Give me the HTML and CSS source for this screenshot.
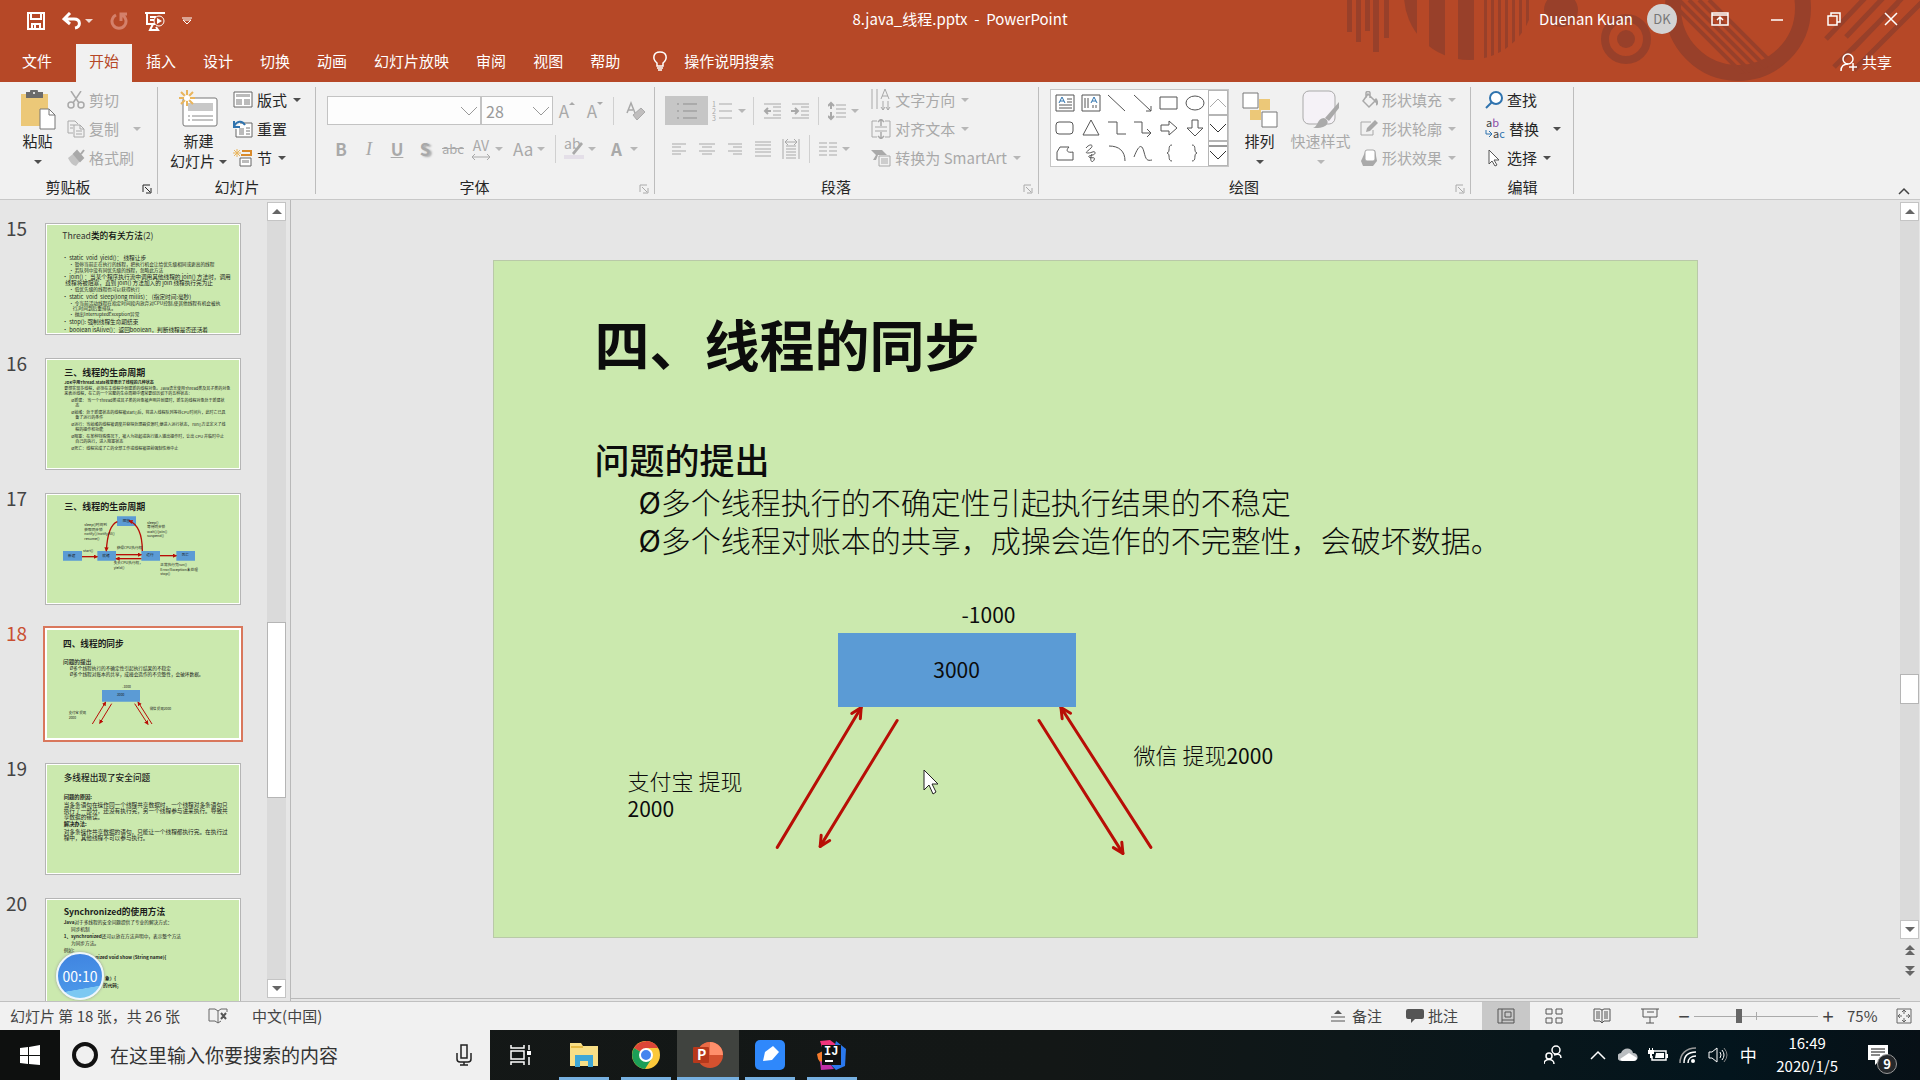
FILE: index.html
```html
<!DOCTYPE html>
<html lang="zh-CN">
<head>
    <meta charset="UTF-8">
    <meta name="viewport" content="width=device-width, initial-scale=1.0">
    <title>8.java_线程.pptx - PowerPoint</title>
    <link rel="stylesheet" href="styles.css">
</head>
<body>
    <!-- shared arrow heads -->
    <svg class="defs" width="0" height="0" aria-hidden="true">
        <defs>
            <marker id="arrow" viewBox="0 0 14 14" refX="12" refY="7" markerWidth="14" markerHeight="14" markerUnits="userSpaceOnUse" orient="auto">
                <path d="M2 2l10 5-10 5" fill="none" stroke="#b80e06" stroke-width="3" stroke-linecap="round" stroke-linejoin="round"/>
            </marker>
            <marker id="arrow-fill" viewBox="0 0 12 12" refX="10" refY="6" markerWidth="13" markerHeight="13" markerUnits="userSpaceOnUse" orient="auto">
                <path d="M0 0l12 6-12 6z" fill="#b80e06"/>
            </marker>
            <symbol id="launcher" viewBox="0 0 10 10">
                <path d="M1 8V1h7M3 3l5 5M9 4v5H4" fill="none" stroke="currentColor"/>
            </symbol>
        </defs>
    </svg>

    <header class="top">
        <svg class="decor" viewBox="1320 0 600 82" aria-hidden="true">
            <defs><clipPath id="disc"><circle cx="1469" cy="-5" r="65"/></clipPath>
            <clipPath id="hoop"><circle cx="1738" cy="8" r="66"/></clipPath></defs>
            <g fill="#98402a">
                <path d="M1347 0h5v32h-5zM1356 0h5v42h-5zM1365 0h5v31h-5zM1373 0h6v52h-6zM1384 0h5v38h-5z"/>
                <g clip-path="url(#disc)"><path d="M1400 0h17v60h-17zM1429 0h16v60h-16zM1458 0h16v60h-16zM1484 0h3v60h-3zM1491 0h3v60h-3zM1498 0h3v60h-3zM1505 0h3v60h-3zM1512 0h3v60h-3zM1519 0h3v60h-3zM1526 0h3v60h-3z"/></g>
                <circle cx="1561" cy="10" r="17"/>
                <circle cx="1626" cy="39" r="9"/>
            </g>
            <g fill="none" stroke="#98402a">
                <circle cx="1626" cy="39" r="21" stroke-width="8"/>
                <circle cx="1738" cy="8" r="65" stroke-width="16"/>
                <g clip-path="url(#hoop)"><path d="M1669 0l80 80M1679 0l80 80M1689 0l80 80M1699 0l80 80M1709 0l80 80" stroke-width="4"/></g>
                <path d="M1826 39l40-42M1846 37l38-40M1852 50l52-54M1834 67l64-64M1854 70l74-74" stroke-width="5"/>
            </g>
        </svg>

        <div class="titlebar">
            <div class="quick">
                <button aria-label="保存"><svg width="18" height="18" viewBox="0 0 18 18"><path d="M1 1h16v16H1zM4 1v6h10V1M5 17v-5h8v5" fill="none" stroke="#fff" stroke-width="2"/><path d="M7 13h2v4H7z" fill="#fff"/></svg></button>
                <button aria-label="撤消"><svg width="20" height="18" viewBox="0 0 20 18"><path d="M8 1L2 7l6 5M3 7h9c7 0 7 8 1 9" fill="none" stroke="#fff" stroke-width="3"/></svg><i class="caret"></i></button>
                <button aria-label="重复" class="dim"><svg width="18" height="18" viewBox="0 0 18 18"><path d="M6 3a7 7 0 1 0 6 0M11 9V2h6" fill="none" stroke="#d4806a" stroke-width="3"/></svg></button>
                <button aria-label="从头开始"><svg width="20" height="20" viewBox="0 0 20 20"><path d="M0 2h20M2 2v11h8M5 6h6M5 9h4M8 13l-3 6h8l-2-3" fill="none" stroke="#fff" stroke-width="2"/><circle cx="14" cy="10" r="5" fill="#b64827" stroke="#fff"/><path d="M12 7l5 3-5 3z" fill="#fff"/></svg></button>
                <button aria-label="自定义快速访问工具栏"><svg width="10" height="8" viewBox="0 0 10 8"><path d="M0 1h10M1 3h8L5 7z" fill="none" stroke="#fff"/></svg></button>
            </div>
            <div class="doc-title">8.java_线程.pptx&nbsp; -&nbsp; PowerPoint</div>
            <div class="account">
                <span>Duenan Kuan</span>
                <span class="avatar">DK</span>
                <button aria-label="功能区显示选项"><svg width="18" height="14" viewBox="0 0 18 14"><path d="M1 1h16v12H1zM1 3h16M9 12V6M6 8l3-3 3 3" fill="none" stroke="#fff" stroke-width="1.5"/></svg></button>
                <button aria-label="最小化"><svg width="14" height="14" viewBox="0 0 14 14"><path d="M1 8h12" stroke="#fff" stroke-width="1.5"/></svg></button>
                <button aria-label="还原"><svg width="14" height="14" viewBox="0 0 14 14"><path d="M1 4h9v9H1zM4 4V1h9v9h-3" fill="none" stroke="#fff" stroke-width="1.5"/></svg></button>
                <button aria-label="关闭"><svg width="14" height="14" viewBox="0 0 14 14"><path d="M1 1l12 12M13 1L1 13" stroke="#fff" stroke-width="1.5"/></svg></button>
            </div>
        </div>

        <nav class="tabs">
            <button class="tab file">文件</button>
            <button class="tab active">开始</button>
            <button class="tab">插入</button>
            <button class="tab">设计</button>
            <button class="tab">切换</button>
            <button class="tab">动画</button>
            <button class="tab">幻灯片放映</button>
            <button class="tab">审阅</button>
            <button class="tab">视图</button>
            <button class="tab">帮助</button>
            <button class="tab tell"><svg width="16" height="20" viewBox="0 0 16 20"><path d="M5 15v-3C0 8 1 1 8 1s8 7 3 11v3zM5 17h6M6 19h4" fill="none" stroke="#fff" stroke-width="1.5"/></svg>操作说明搜索</button>
            <button class="tab share"><svg width="18" height="18" viewBox="0 0 18 18"><circle cx="8" cy="6" r="5" fill="none" stroke="#fff" stroke-width="1.5"/><path d="M1 18c0-5 3-7 7-7M13 10v8M9 14h8" fill="none" stroke="#fff" stroke-width="1.5"/></svg>共享</button>
        </nav>
    </header>

    <section class="ribbon">
        <div class="group clipboard">
            <div class="group-body">
                <button class="big">
                    <svg width="36" height="40" viewBox="0 0 36 40"><path d="M1 4h27v32H1z" fill="#ecc878"/><path d="M6 2h4a4 4 0 0 1 8 0h5v6H6z" fill="#6b6b6b"/><circle cx="14" cy="3" r="1" fill="#fff"/><path d="M20 19h9l6 6v14H20z" fill="#fff" stroke="#777"/><path d="M29 19v6h6" fill="none" stroke="#777"/></svg>
                    <span>粘贴</span><i class="caret"></i>
                </button>
                <div class="stack disabled">
                    <button><svg width="18" height="18" viewBox="0 0 18 18" fill="none" stroke="currentColor" stroke-width="1.5"><path d="M4 0l8 12M14 0L6 12"/><circle cx="4" cy="14" r="3"/><circle cx="14" cy="14" r="3"/></svg>剪切</button>
                    <button><svg width="18" height="18" viewBox="0 0 18 18" fill="none" stroke="currentColor"><path d="M6 13H1V1h7l3 3M3 5h4M3 8h3M7 5h6l4 4v8H7zM13 5v4h4M9 11h6M9 14h6"/></svg>复制<i class="caret far"></i></button>
                    <button><svg width="18" height="18" viewBox="0 0 18 18"><path d="M1 9l5-4 7 7-4 5C5 16 3 13 1 9z" fill="#c4c4c4"/><path d="M7 5l3-3 6 7-3 3zM14 5l3-4" fill="currentColor" stroke="currentColor" stroke-width="2"/></svg>格式刷</button>
                </div>
            </div>
            <div class="group-name">剪贴板<svg class="launch"><use href="#launcher"/></svg></div>
        </div>

        <div class="group slides">
            <div class="group-body">
                <button class="big">
                    <svg width="40" height="40" viewBox="0 0 40 40"><rect x="4" y="8" width="34" height="28" rx="2" fill="#fff" stroke="#777"/><path d="M9 13h25v8H9z" fill="#c8c8c8"/><path d="M9 26h2M13 26h21M9 30h2M13 30h21" stroke="#888"/><path d="M8 0v16M0 8h16M2 2l12 12M14 2L2 14" stroke="#e9b55c" stroke-width="2"/><circle cx="8" cy="8" r="3" fill="#fff"/></svg>
                    <span>新建<br>幻灯片<i class="caret inline"></i></span>
                </button>
                <div class="stack">
                    <button><svg width="20" height="18" viewBox="0 0 20 18"><path d="M1 1h18v15H1z" fill="#fff" stroke="#666"/><path d="M3 3h14v3H3zM3 8h6v6H3z" fill="#bbb"/><path d="M11 9h6M11 11h6M11 13h6" stroke="#777"/></svg>版式<i class="caret"></i></button>
                    <button><svg width="20" height="18" viewBox="0 0 20 18"><path d="M7 3h12v14H3V9" fill="#fff" stroke="#666"/><path d="M6 8h5v7H6z" fill="#bbb"/><path d="M13 8h4M13 11h4M13 14h4" stroke="#777"/><path d="M1 1v6h6M1 6c3-5 8-6 11-1" fill="none" stroke="#2f73ae" stroke-width="2"/></svg>重置</button>
                    <button><svg width="20" height="18" viewBox="0 0 20 18"><path d="M4 0v8M0 4h8M1 1l6 6M7 1L1 7" stroke="#e9b55c"/><path d="M9 2h9v4H8" fill="none" stroke="#d98a2b" stroke-width="2"/><path d="M7 9h11v8H7z" fill="#fff" stroke="#666"/><path d="M9 11h7v3H9z" fill="#bbb"/></svg>节<i class="caret"></i></button>
                </div>
            </div>
            <div class="group-name">幻灯片</div>
        </div>

        <div class="group font">
            <div class="group-body rows disabled">
                <div class="row">
                    <div class="combo family"><select aria-label="字体"><option></option></select><svg width="16" height="10" viewBox="0 0 16 10"><path d="M0 1l8 8 8-8" fill="none" stroke="#999"/></svg></div>
                    <div class="combo size"><select aria-label="字号"><option>28</option></select><svg width="16" height="10" viewBox="0 0 16 10"><path d="M0 1l8 8 8-8" fill="none" stroke="#999"/></svg></div>
                    <button class="tool letter" aria-label="增大字号">A<i class="tip up"></i></button>
                    <button class="tool letter" aria-label="减小字号">A<i class="tip"></i></button>
                    <i class="bar"></i>
                    <button class="tool eraser" aria-label="清除格式"><svg width="20" height="20" viewBox="0 0 20 20"><path d="M1 12L5 2l4 10M2 9h5" fill="none" stroke="currentColor" stroke-width="1.5"/><path d="M7 14l8-7 4 4-8 8z" fill="#c0bebe" stroke="#aaa"/></svg></button>
                </div>
                <div class="row">
                    <button class="tool wide"><b>B</b></button>
                    <button class="tool wide serif"><em>I</em></button>
                    <button class="tool wide"><b><u>U</u></b></button>
                    <button class="tool wide shadow"><b>S</b></button>
                    <button class="tool wide strike"><s>abc</s></button>
                    <button class="tool spacing" aria-label="字符间距"><span>AV</span><svg width="20" height="7" viewBox="0 0 20 7"><path d="M1 4h18M4 1L1 4l3 3M16 1l3 3-3 3" fill="none" stroke="currentColor"/></svg></button>
                    <i class="caret"></i>
                    <button class="tool aa">Aa<i class="caret"></i></button>
                    <i class="bar"></i>
                    <button class="tool" aria-label="突出显示"><svg width="20" height="24" viewBox="0 0 20 24"><text x="0" y="12" class="av">ab</text><path d="M8 16l9-11 2 2-9 11z" fill="currentColor"/><path d="M0 18h20v4H0z" fill="#e4dfe8"/></svg></button>
                    <i class="caret"></i>
                    <button class="tool color"><b>A</b></button>
                    <i class="caret"></i>
                </div>
            </div>
            <div class="group-name">字体<svg class="launch dim"><use href="#launcher"/></svg></div>
        </div>

        <div class="group paragraph">
            <div class="group-body disabled">
                <div class="rows">
                    <div class="row">
                        <button class="tool bullets" aria-label="项目符号"><svg width="20" height="18" viewBox="0 0 20 18"><path d="M6 2h14M6 9h14M6 16h14M0 2h2M0 9h2M0 16h2" stroke="#8f8f8f"/></svg></button>
                        <button class="tool" aria-label="编号"><svg width="20" height="20" viewBox="0 0 20 20"><path d="M7 3h13M7 10h13M7 17h13" stroke="currentColor"/><text x="0" y="6" class="num">1</text><text x="0" y="13" class="num">2</text><text x="0" y="20" class="num">3</text></svg></button>
                        <i class="caret"></i><i class="bar"></i>
                        <button class="tool" aria-label="减少缩进"><svg width="18" height="16" viewBox="0 0 18 16"><path d="M1 1h17M10 4h8M10 8h8M10 12h8M1 15h17" stroke="currentColor"/><path d="M8 8H2M5 5L2 8l3 3" fill="none" stroke="currentColor" stroke-width="2"/></svg></button>
                        <button class="tool" aria-label="增加缩进"><svg width="18" height="16" viewBox="0 0 18 16"><path d="M1 1h17M10 4h8M10 8h8M10 12h8M1 15h17" stroke="currentColor"/><path d="M0 8h7M4 5l3 3-3 3" fill="none" stroke="currentColor" stroke-width="2"/></svg></button>
                        <i class="bar"></i>
                        <button class="tool" aria-label="行距"><svg width="18" height="20" viewBox="0 0 18 20"><path d="M8 4h10M8 8h10M8 12h10M8 16h10" stroke="currentColor"/><path d="M3 2v6M3 11v7M0 5l3-3 3 3M0 15l3 3 3-3" fill="none" stroke="currentColor" stroke-width="2"/></svg></button>
                        <i class="caret"></i>
                    </div>
                    <div class="row">
                        <button class="tool" aria-label="左对齐"><svg width="14" height="14" viewBox="0 0 14 14"><path d="M0 2h14M0 5h9M0 9h14M0 12h9" stroke="currentColor"/></svg></button>
                        <button class="tool" aria-label="居中"><svg width="16" height="14" viewBox="0 0 16 14"><path d="M0 2h16M3 5h10M0 9h16M3 12h10" stroke="currentColor"/></svg></button>
                        <button class="tool" aria-label="右对齐"><svg width="14" height="14" viewBox="0 0 14 14"><path d="M0 2h14M5 5h9M0 9h14M5 12h9" stroke="currentColor"/></svg></button>
                        <button class="tool" aria-label="两端对齐"><svg width="16" height="16" viewBox="0 0 16 16"><path d="M0 1h16M0 4h16M0 8h16M0 11h16M0 15h16" stroke="currentColor"/></svg></button>
                        <button class="tool" aria-label="分散对齐"><svg width="18" height="20" viewBox="0 0 18 20"><path d="M1 0v20M17 0v20M4 7h10M4 10h10M4 13h10M4 16h10M4 19h10M3 3h12M6 0L3 3l3 3M12 0l3 3-3 3" fill="none" stroke="currentColor"/></svg></button>
                        <i class="bar"></i>
                        <button class="tool" aria-label="分栏"><svg width="18" height="14" viewBox="0 0 18 14"><path d="M0 1h8M0 5h8M0 9h8M0 13h8M10 1h8M10 5h8M10 9h8M10 13h8" stroke="currentColor"/></svg></button>
                        <i class="caret"></i>
                    </div>
                </div>
                <div class="stack">
                    <button><svg width="20" height="22" viewBox="0 0 20 22"><path d="M1 0v20M6 0v20M12 12v9M17 12v9M10 18l2 3 2-3M15 18l2 3 2-3M10 10l4-10 4 10M11 7h6" fill="none" stroke="currentColor"/></svg>文字方向<i class="caret"></i></button>
                    <button><svg width="20" height="20" viewBox="0 0 20 20"><path d="M6 2H1v16h5M14 2h5v16h-5M4 8h12M4 12h12" fill="none" stroke="currentColor"/><path d="M10 7V1M7 3l3-3 3 3M10 13v6M7 17l3 3 3-3" fill="none" stroke="currentColor" stroke-width="1.5"/></svg>对齐文本<i class="caret"></i></button>
                    <button><svg width="20" height="18" viewBox="0 0 20 18"><path d="M0 1h11l5 5H7L5 11H2l3-5z" fill="currentColor"/><path d="M8 7h11v10H8z" fill="#f1f1f1" stroke="currentColor"/><path d="M10 10h7M10 12h7M10 14h7" stroke="currentColor"/></svg>转换为 SmartArt<i class="caret"></i></button>
                </div>
            </div>
            <div class="group-name">段落<svg class="launch dim"><use href="#launcher"/></svg></div>
        </div>

        <div class="group drawing">
            <div class="group-body">
                <div class="gallery">
                    <div class="shapes">
                        <button aria-label="文本框"><svg viewBox="0 0 20 18"><path d="M1 1h18v16H1z"/><path d="M12 5h5M12 8h5M4 11h13M4 14h13"/><path d="M4 9l3-6 3 6M5 7h4" stroke="#2f73ae"/></svg></button>
                        <button aria-label="竖排文本框"><svg viewBox="0 0 20 18"><path d="M1 1h18v16H1zM4 4v10M7 4v10M12 11v3M15 11v3"/><path d="M10 9l3-6 3 6M11 7h4" stroke="#2f73ae"/></svg></button>
                        <button aria-label="直线"><svg viewBox="0 0 20 18"><path d="M1 1l17 16"/></svg></button>
                        <button aria-label="箭头"><svg viewBox="0 0 20 18"><path d="M1 1l17 16M18 12v5h-5"/></svg></button>
                        <button aria-label="矩形"><svg viewBox="0 0 20 18"><path d="M1 3h17v12H1z"/></svg></button>
                        <button aria-label="椭圆"><svg viewBox="0 0 20 18"><ellipse cx="10" cy="9" rx="9" ry="7"/></svg></button>
                        <button aria-label="圆角矩形"><svg viewBox="0 0 20 18"><rect x="1" y="3" width="17" height="12" rx="3"/></svg></button>
                        <button aria-label="三角形"><svg viewBox="0 0 20 18"><path d="M10 1l8 15H2z"/></svg></button>
                        <button aria-label="肘形连接符"><svg viewBox="0 0 20 18"><path d="M1 3h9v12h9"/></svg></button>
                        <button aria-label="肘形箭头"><svg viewBox="0 0 20 18"><path d="M1 3h8v11h9M14 10l4 4-4 4"/></svg></button>
                        <button aria-label="右箭头"><svg viewBox="0 0 20 18"><path d="M2 6h8V2l8 7-8 7v-4H2z"/></svg></button>
                        <button aria-label="下箭头"><svg viewBox="0 0 20 18"><path d="M7 1h6v8h5l-8 8-8-8h5z"/></svg></button>
                        <button aria-label="任意多边形"><svg viewBox="0 0 20 18"><path d="M5 3h9c-4 4-1 6 4 5v8H2V8z"/></svg></button>
                        <button aria-label="自由曲线"><svg viewBox="0 0 20 18"><path d="M5 4c4-5 8-3 5 0-3 3-7 5-3 5s7-3 7 0-8 2-6 4 7-1 5 3-5 0-2-6"/></svg></button>
                        <button aria-label="弧形"><svg viewBox="0 0 20 18"><path d="M2 2c10 0 16 5 16 15"/></svg></button>
                        <button aria-label="曲线"><svg viewBox="0 0 20 18"><path d="M1 13C6 0 9 0 11 8s3 9 8 8"/></svg></button>
                        <button aria-label="左大括号"><svg viewBox="0 0 20 18"><path d="M13 1c-5 0-1 7-5 8 4 1 0 8 5 8"/></svg></button>
                        <button aria-label="右大括号"><svg viewBox="0 0 20 18"><path d="M7 1c5 0 1 7 5 8-4 1 0 8-5 8"/></svg></button>
                    </div>
                    <div class="scroller">
                        <button aria-label="上一行"><svg viewBox="0 0 16 10"><path d="M0 9l8-8 8 8" stroke="#aaa"/></svg></button>
                        <button aria-label="下一行"><svg viewBox="0 0 16 10"><path d="M0 1l8 8 8-8"/></svg></button>
                        <button aria-label="更多形状"><svg viewBox="0 0 16 16"><path d="M-4 1h24M0 6l8 8 8-8"/></svg></button>
                    </div>
                </div>
                <button class="big arrange">
                    <svg width="36" height="36" viewBox="0 0 36 36"><path d="M17 7h11v11H17zM8 18h11v10H8z" fill="#ecc878"/><path d="M1 1h15v15H1zM20 20h15v15H20z" fill="#fff" stroke="#777"/></svg>
                    <span>排列</span><i class="caret"></i>
                </button>
                <button class="big quick-style disabled">
                    <svg width="40" height="40" viewBox="0 0 40 40"><rect x="2" y="1" width="32" height="33" rx="6" fill="#f5f2f7" stroke="currentColor"/><path d="M38 12L24 28l4 3 10-13z" fill="currentColor"/><path d="M12 38c5-1 4-10 11-10 6 2 6 11-11 10z" fill="#aaa"/></svg>
                    <span>快速样式</span><i class="caret"></i>
                </button>
                <div class="stack disabled">
                    <button><svg width="18" height="18" viewBox="0 0 18 18" fill="none" stroke="currentColor" stroke-width="1.5"><path d="M8 3l7 7-6 6-6-6zM6 7V2c0-2 4-2 4 0v5"/><path d="M15 8c2 2 2 5 1 5" stroke-width="3"/></svg>形状填充<i class="caret"></i></button>
                    <button><svg width="18" height="18" viewBox="0 0 18 18"><path d="M11 2H1v13h12v-5" fill="none" stroke="currentColor"/><path d="M6 12l1-4 8-8 3 3-8 8z" fill="currentColor"/></svg>形状轮廓<i class="caret"></i></button>
                    <button><svg width="18" height="18" viewBox="0 0 18 18"><path d="M6 1h9l2 11-4 5H3l-2-5z" fill="currentColor"/><rect x="5" y="1" width="10" height="11" rx="2" fill="#fff" stroke="currentColor"/></svg>形状效果<i class="caret"></i></button>
                </div>
            </div>
            <div class="group-name">绘图<svg class="launch dim"><use href="#launcher"/></svg></div>
        </div>

        <div class="group editing">
            <div class="group-body">
                <div class="stack">
                    <button><svg width="18" height="18" viewBox="0 0 18 18"><circle cx="11" cy="7" r="6" fill="#fff" stroke="#2f73ae" stroke-width="2"/><path d="M7 11l-6 6" stroke="#2f73ae" stroke-width="2"/></svg>查找</button>
                    <button><svg width="20" height="22" viewBox="0 0 20 22"><text x="1" y="9" class="rep">a<tspan fill="#8a4ba8">b</tspan></text><text x="8" y="20" class="rep">a<tspan fill="#2f73ae">c</tspan></text><path d="M1 12v4h5M4 13l3 3-3 3" fill="none" stroke="#2f73ae"/></svg>替换<i class="caret far"></i></button>
                    <button><svg width="18" height="18" viewBox="0 0 18 18"><path d="M4 1v14l3-3 3 5 2-1-3-5h5z" fill="#fff" stroke="#555"/></svg>选择<i class="caret"></i></button>
                </div>
            </div>
            <div class="group-name">编辑</div>
        </div>
        <button class="collapse" aria-label="折叠功能区"><svg width="12" height="8" viewBox="0 0 12 8"><path d="M1 7l5-5 5 5" fill="none" stroke="#444" stroke-width="1.5"/></svg></button>
    </section>

    <main class="work">
        <aside class="outline">
            <ol class="slides-list">
                <li><span>15</span>
                    <svg class="thumb" viewBox="0 0 576 324">
                        <text x="46" y="42" font-size="26" fill="#333">Thread<tspan fill="#111" font-weight="500">类的有关方法</tspan>(2)</text>
                        <g font-size="17">
                            <text x="46" y="105">• static&nbsp; void&nbsp; yield()：&nbsp;线程让步</text>
                            <text x="46" y="162">• join() ：当某个程序执行流中调用其他线程的 join() 方法时，调用</text>
                            <text x="55" y="180">线程将被阻塞，直到 join() 方法加入的 join 线程执行完为止</text>
                            <text x="46" y="222">• static&nbsp; void&nbsp; sleep(long millis)：&nbsp;(指定时间:毫秒)</text>
                            <text x="46" y="297">• stop(): 强制线程生命期结束</text>
                            <text x="46" y="322">• boolean isAlive()：返回boolean，判断线程是否还活着</text>
                        </g>
                        <g font-size="14">
                            <text x="66" y="122">• 暂停当前正在执行的线程，把执行机会让给优先级相同或更高的线程</text>
                            <text x="66" y="141">• 若队列中没有同优先级的线程，忽略此方法</text>
                            <text x="66" y="198">• 低优先级的线程也可以获得执行</text>
                            <text x="66" y="240">• 令当前活动线程在指定时间段内放弃对CPU控制,使其他线程有机会被执</text>
                            <text x="77" y="255">行,时间到后重排队。</text>
                            <text x="66" y="273">• 抛出InterruptedException异常</text>
                        </g>
                    </svg>
                </li>
                <li><span>16</span>
                    <svg class="thumb" viewBox="0 0 576 324">
                        <text x="52" y="47" font-size="27" font-weight="700">三、线程的生命周期</text>
                        <text x="52" y="73" font-size="12" font-weight="700">JDK中用Thread.State枚举表示了线程的几种状态</text>
                        <g font-size="12">
                            <text x="52" y="91">要想实现多线程，必须在主线程中创建新的线程对象。Java语言使用Thread类及其子类的对象</text>
                            <text x="52" y="106">来表示线程，在它的一个完整的生命周期中通常要经历如下的五种状态：</text>
                            <text x="73" y="125">Ø新建： 当一个Thread类或其子类的对象被声明并创建时，新生的线程对象处于新建状</text>
                            <text x="85" y="141">态</text>
                            <text x="73" y="161">Ø就绪：处于新建状态的线程被start()后，将进入线程队列等待CPU时间片，此时它已具</text>
                            <text x="85" y="176">备了运行的条件</text>
                            <text x="73" y="197">Ø运行：当就绪的线程被调度并获得处理器资源时,便进入运行状态， run()方法定义了线</text>
                            <text x="85" y="214">程的操作和功能</text>
                            <text x="73" y="233">Ø阻塞：在某种特殊情况下，被人为挂起或执行输入输出操作时，让出 CPU 并临时中止</text>
                            <text x="85" y="250">自己的执行，进入阻塞状态</text>
                            <text x="73" y="269">Ø死亡：线程完成了它的全部工作或线程被提前强制性地中止</text>
                        </g>
                    </svg>
                </li>
                <li><span>17</span>
                    <svg class="thumb" viewBox="0 0 576 324">
                        <text x="52" y="46" font-size="27" font-weight="700">三、线程的生命周期</text>
                        <path d="M210 64h57v29h-57zM48 168h57v29H48zM151 168h56v29h-56zM283 168h56v29h-56zM388 168h56v29h-56z" fill="#5b9bd5"/>
                        <g fill="none" stroke="#b80e06" stroke-width="4">
                            <path d="M211 80C186 90 180 130 178 168" marker-end="url(#arrow-fill)"/>
                            <path d="M286 168c0-50-12-80-40-91" marker-end="url(#arrow-fill)"/>
                            <path d="M105 185h46" marker-end="url(#arrow-fill)"/>
                            <path d="M207 179h76" marker-end="url(#arrow-fill)"/>
                            <path d="M283 191h-76" marker-end="url(#arrow-fill)"/>
                            <path d="M339 182h49" marker-end="url(#arrow-fill)"/>
                        </g>
                        <g font-size="11">
                            <text x="227" y="82">阻塞</text><text x="63" y="186">新建</text><text x="166" y="186">就绪</text><text x="298" y="184">运行</text><text x="404" y="184">死亡</text>
                            <text x="112" y="94">sleep()时间到</text><text x="112" y="108">获取同步锁</text><text x="112" y="121">notify()/notifyAll()</text><text x="112" y="134">resume()</text>
                            <text x="300" y="87">sleep()</text><text x="300" y="100">等待同步锁</text><text x="300" y="113">wait()/join()</text><text x="300" y="126">suspend()</text>
                            <text x="108" y="171">start()</text><text x="209" y="161">获得CPU执行权</text><text x="200" y="206">失去CPU执行权，</text><text x="200" y="222">yield()</text>
                            <text x="340" y="213">正常执行完run()</text><text x="340" y="228">Error/Exception未处理</text><text x="340" y="241">stop()</text>
                        </g>
                    </svg>
                </li>
                <li class="current"><span>18</span>
                    <svg class="thumb" viewBox="0 0 576 324">
                        <text x="48" y="50" font-size="26" font-weight="700">四、线程的同步</text>
                        <text x="48" y="101" font-size="17" font-weight="500">问题的提出</text>
                        <g font-size="14"><text x="68" y="120">Ø多个线程执行的不确定性引起执行结果的不稳定</text><text x="68" y="138">Ø多个线程对账本的共享，成操会造作的不完整性，会破坏数据。</text></g>
                        <path d="M165 180h114v35H165z" fill="#5b9bd5"/>
                        <g font-size="10"><text x="226" y="173">-1000</text><text x="210" y="198">3000</text><text x="65" y="252">支付宝 提现</text><text x="65" y="266">2000</text><text x="308" y="240">微信 提现2000</text></g>
                        <g stroke="#b80e06" stroke-width="3"><path d="M136 282l40-66" marker-end="url(#arrow-fill)"/><path d="M194 221l-36 59" marker-end="url(#arrow-fill)"/><path d="M263 221l40 62" marker-end="url(#arrow-fill)"/><path d="M315 282l-42-66" marker-end="url(#arrow-fill)"/></g>
                    </svg>
                </li>
                <li><span>19</span>
                    <svg class="thumb" viewBox="0 0 576 324">
                        <text x="50" y="48" font-size="26" font-weight="500">多线程出现了安全问题</text>
                        <g font-size="16" font-weight="700"><text x="50" y="102">问题的原因:</text><text x="50" y="183">解决办法:</text></g>
                        <g font-size="17">
                            <text x="50" y="127">当多条语句在操作同一个线程共享数据时，一个线程对多条语句只</text>
                            <text x="50" y="145">执行了一部分，还没有执行完，另一个线程参与进来执行。导致共</text>
                            <text x="50" y="161">享数据的错误。</text>
                            <text x="50" y="208">对多条操作共享数据的语句，只能让一个线程都执行完。在执行过</text>
                            <text x="50" y="226">程中，其他线程不可以参与执行。</text>
                        </g>
                    </svg>
                </li>
                <li><span>20</span>
                    <svg class="thumb" viewBox="0 0 576 324">
                        <text x="50" y="46" font-size="26" font-weight="700">Synchronized的使用方法</text>
                        <g font-size="14">
                            <text x="50" y="72"><tspan font-weight="700">Java</tspan>对于多线程的安全问题提供了专业的解决方式：</text>
                            <text x="72" y="92">同步机制</text>
                            <text x="50" y="114"><tspan font-weight="700">1、synchronized</tspan>还可以放在方法声明中，表示整个方法</text>
                            <text x="72" y="134">为同步方法。</text>
                            <text x="50" y="155">例如:</text>
                            <text x="145" y="177" font-weight="700">nized void show (String name){</text>
                            <text x="174" y="240" font-weight="700">象）{</text>
                            <text x="168" y="260" font-weight="700">的代码;</text>
                        </g>
                    </svg>
                </li>
            </ol>
            <div class="vscroll">
                <button aria-label="向上滚动"><i class="tri up"></i></button>
                <div class="track"><i class="handle"></i></div>
                <button aria-label="向下滚动"><i class="tri"></i></button>
            </div>
            <div class="timer">00:10</div>
        </aside>

        <section class="stage">
            <article class="slide">
                <h1>四、线程的同步</h1>
                <h2>问题的提出</h2>
                <ul>
                    <li>多个线程执行的不确定性引起执行结果的不稳定</li>
                    <li>多个线程对账本的共享，成操会造作的不完整性，会破坏数据。</li>
                </ul>
                <!-- withdrawal diagram: shapes sit freely on the slide canvas -->
                <svg class="lines" viewBox="0 0 1204 677" aria-hidden="true">
                    <g stroke="#b80e06" stroke-width="3" stroke-linecap="round">
                        <path d="M283 587l84-140" marker-end="url(#arrow)"/>
                        <path d="M403 460l-77 126" marker-end="url(#arrow)"/>
                        <path d="M545 460l84 133" marker-end="url(#arrow)"/>
                        <path d="M657 587l-90-140" marker-end="url(#arrow)"/>
                    </g>
                </svg>
                <div class="node minus">-1000</div>
                <div class="node account-box">3000</div>
                <div class="node alipay">支付宝 提现<br><span>2000</span></div>
                <div class="node wechat">微信 提现<span>2000</span></div>
                <svg class="pointer" width="16" height="26" viewBox="0 0 16 26"><path d="M1 1v20l5-5 4 9 3-2-4-8h6z" fill="#fff" stroke="#222"/></svg>
            </article>
        </section>

        <div class="vscroll main-scroll">
            <button aria-label="向上滚动"><i class="tri up"></i></button>
            <div class="track"><i class="handle"></i></div>
            <button aria-label="向下滚动"><i class="tri"></i></button>
            <button class="page" aria-label="上一张幻灯片"><i class="tri up"></i><i class="tri up"></i></button>
            <button class="page" aria-label="下一张幻灯片"><i class="tri"></i><i class="tri"></i></button>
        </div>
    </main>

    <footer class="status">
        <span class="count">幻灯片 第 18 张，共 26 张</span>
        <button class="proof" aria-label="拼写检查"><svg width="20" height="16" viewBox="0 0 20 16"><path d="M10 3L7 1H1v12h6l3 2 3-2M10 3v12M10 3l3-2h6v3" fill="none" stroke="#666"/><path d="M13 5l5 6M18 5l-5 6" stroke="#555" stroke-width="2"/></svg></button>
        <span>中文(中国)</span>
        <div class="status-right">
            <button class="notes"><svg width="14" height="14" viewBox="0 0 14 14"><path d="M3 5l4-4 4 4z" fill="#555"/><path d="M0 8h14M0 12h14" stroke="#555"/></svg>备注</button>
            <button class="comments"><svg width="18" height="16" viewBox="0 0 18 16"><path d="M2 1h14q2 0 2 2v6q0 2-2 2H9l-4 4v-4H2q-2 0-2-2V3q0-2 2-2z" fill="#555"/></svg>批注</button>
            <div class="views">
                <button class="on" aria-label="普通视图"><svg width="18" height="16" viewBox="0 0 18 16"><path d="M1 1h16v14H1zM5 1v14M8 4h6v5H8zM5 12h12" fill="none" stroke="#555"/></svg></button>
                <button aria-label="幻灯片浏览"><svg width="18" height="16" viewBox="0 0 18 16"><path d="M1 1h6v5H1zM11 1h6v5h-6zM1 10h6v5H1zM11 10h6v5h-6z" fill="none" stroke="#555"/></svg></button>
                <button aria-label="阅读视图"><svg width="18" height="16" viewBox="0 0 18 16"><path d="M1 1h6l2 1 2-1h6v12h-6l-2 2-2-2H1zM9 2v13M3 4h4M3 6h4M3 8h4M3 10h4M11 4h4M11 6h4M11 8h4M11 10h4" fill="none" stroke="#555"/></svg></button>
                <button aria-label="幻灯片放映"><svg width="18" height="16" viewBox="0 0 18 16"><path d="M0 1h18M2 1v8h14V1M6 4h7M9 9v6M5 15h8" fill="none" stroke="#555"/></svg></button>
            </div>
            <div class="zoom">
                <button aria-label="缩小">−</button>
                <input type="range" min="0" max="100" value="36" aria-label="缩放">
                <button aria-label="放大">+</button>
            </div>
            <span class="percent">75%</span>
            <button aria-label="适应窗口"><svg width="16" height="16" viewBox="0 0 16 16"><path d="M1 1h14v14H1zM8 2v4M8 10v4M2 8h4M10 8h4M6 4l2-2 2 2M6 12l2 2 2-2M4 6L2 8l2 2M12 6l2 2-2 2" fill="none" stroke="#666"/></svg></button>
        </div>
    </footer>

    <div class="taskbar">
        <button class="start" aria-label="开始"><svg width="20" height="20" viewBox="0 0 20 20"><path d="M0 3l8-1v8H0zM9 2l11-2v10H9zM0 11h8v8l-8-1zM9 11h11v9L9 19z" fill="#fff"/></svg></button>
        <div class="search">
            <svg width="28" height="28" viewBox="0 0 28 28"><circle cx="14" cy="14" r="11" fill="none" stroke="#111" stroke-width="4"/></svg>
            <input type="text" placeholder="在这里输入你要搜索的内容" aria-label="搜索">
            <svg width="16" height="22" viewBox="0 0 16 22"><path d="M5 1h6v13H5zM1 9v6q0 3 3 3h8q3 0 3-3V9M8 18v3M4 21h8" fill="none" stroke="#222" stroke-width="1.5"/></svg>
        </div>
        <button class="taskview" aria-label="任务视图"><svg width="22" height="20" viewBox="0 0 22 20"><path d="M1 0v3h13V0M1 6h13v8H1zM1 20v-3h13v3M19 0v5M19 12v8" fill="none" stroke="#fff" stroke-width="1.5"/><path d="M17 6h4v4h-4z" fill="#fff"/></svg></button>
        <div class="apps">
            <button aria-label="文件资源管理器"><svg width="30" height="28" viewBox="0 0 30 28"><path d="M1 2h11l2 3h15v20H1z" fill="#f8df86"/><path d="M2 5h12v2H2z" fill="#e6bb45"/><path d="M6 14h18v12h-5v-6h-8v6H6z" fill="#3fa7d6"/></svg></button>
            <button aria-label="Chrome"><svg width="28" height="28" viewBox="0 0 28 28"><circle cx="14" cy="14" r="14" fill="#fbc83a"/><path d="M14 14L2 7a14 14 0 0 1 24 0z" fill="#dc4638"/><path d="M14 14L2 7a14 14 0 0 0 11 21l7-11z" fill="#1c9e57"/><path d="M14 7h12l-6 9z" fill="#fbc83a"/><path d="M14 0a14 14 0 0 1 12 7H14z" fill="#dc4638"/><circle cx="14" cy="14" r="6" fill="#4585ee" stroke="#fff" stroke-width="2"/></svg></button>
            <button class="running" aria-label="PowerPoint"><svg width="30" height="28" viewBox="0 0 30 28"><circle cx="17" cy="14" r="13" fill="#d4512f"/><path d="M17 1a13 13 0 0 1 13 13H17z" fill="#ff8f6b"/><path d="M17 1v13H4A13 13 0 0 1 17 1z" fill="#ea6c47"/><rect y="6" width="16" height="16" rx="1" fill="#b7381b"/><text x="4" y="19" class="logo-p">P</text></svg></button>
            <button aria-label="画笔"><svg width="30" height="30" viewBox="0 0 30 30"><rect width="30" height="30" rx="5" fill="#2f88fb"/><path d="M8 21l2-9 8-6 6 6-7 8z" fill="#fff"/></svg></button>
            <button aria-label="IntelliJ IDEA"><svg width="30" height="30" viewBox="0 0 30 30"><path d="M3 1l10-1 8 6-14 8z" fill="#f2347c"/><path d="M0 14l6-3 1 17-6-9z" fill="#f57b2c"/><path d="M19 1l10 8-1 17-9 4-6-6z" fill="#2a78ed"/><path d="M3 21l10 3 4 5-13 1z" fill="#c22fa8"/><path d="M5 5h19v20H5z" fill="#111"/><text x="7" y="15" class="logo-ij">IJ</text><path d="M8 21h8" stroke="#fff" stroke-width="2"/></svg></button>
        </div>
        <div class="tray">
            <button class="people" aria-label="人脉"><svg width="18" height="20" viewBox="0 0 18 20"><g fill="none" stroke="#fff" stroke-width="1.5"><circle cx="12" cy="5" r="4"/><circle cx="5" cy="11" r="3"/><path d="M0 19c0-6 10-6 10 0M10 10c5-2 7 0 7 3"/></g></svg></button>
            <button aria-label="显示隐藏的图标"><svg width="16" height="10" viewBox="0 0 16 10"><path d="M1 9l7-7 7 7" fill="none" stroke="#fff" stroke-width="1.5"/></svg></button>
            <button aria-label="OneDrive"><svg width="20" height="14" viewBox="0 0 20 14"><path d="M4 13a4 4 0 0 1-1-8C5-1 14-1 15 5c6 0 6 8 1 8z" fill="#b9bdc0"/><path d="M2 11l9-6 8 5q-1 3-4 3H4z" fill="#fff"/></svg></button>
            <button aria-label="电池"><svg width="20" height="14" viewBox="0 0 20 14"><path d="M6 3h12v9H4V8" fill="none" stroke="#fff" stroke-width="1.5"/><path d="M8 5h8v5H7zM18 6h2v4h-2zM0 2h6v4H0zM1 0h1v2H1zM4 0h1v2H4zM2 6h2v4H2z" fill="#fff"/></svg></button>
            <button aria-label="网络"><svg width="18" height="18" viewBox="0 0 18 18"><g fill="none" stroke="#999" stroke-width="1.5"><path d="M1 17C1 8 7 2 17 2"/><path d="M5 17c0-7 4-11 12-11M9 17c0-4 3-7 8-7" stroke="#fff"/></g><circle cx="14" cy="15" r="2" fill="#fff"/></svg></button>
            <button aria-label="音量"><svg width="20" height="18" viewBox="0 0 20 18"><path d="M1 6h3l5-4v14l-5-4H1zM12 6q2 3 0 6M14 4q4 5 0 10" fill="none" stroke="#fff"/><path d="M16 2q6 7 0 14" fill="none" stroke="#888"/></svg></button>
            <button class="ime">中</button>
            <div class="clock">16:49<br>2020/1/5</div>
            <button class="notice" aria-label="通知"><svg width="20" height="22" viewBox="0 0 20 22"><path d="M0 1h20v15h-8l-5 5v-5H0z" fill="#fff"/><path d="M3 5h14M3 8h14M3 11h9" stroke="#111"/></svg><span>9</span></button>
        </div>
    </div>
</body>
</html>
```
FILE: styles.css
```css
*, *::before, *::after {
    box-sizing: border-box;
}

body {
    margin: 0;
    height: 100vh;
    display: flex;
    flex-direction: column;
    overflow: hidden;
    font-family: "Noto Sans CJK SC", "Noto Sans", sans-serif;
    font-size: 15px;
    line-height: 20px;
    color: #262626;
    background: #e6e6e6;
}

button {
    display: flex;
    align-items: center;
    justify-content: center;
    padding: 0;
    border: 0;
    background: none;
    font: inherit;
    color: inherit;
    white-space: nowrap;
}

svg {
    flex: none;
}

.defs {
    position: absolute;
}

.caret {
    flex: none;
    border: 4px solid transparent;
    border-top-color: currentColor;
    border-bottom: 0;
    opacity: 0.8;
}

.disabled {
    color: #a9a9a9;
}

/* title bar and tabs */
.top {
    position: relative;
    flex: none;
    background: #b64827;
    color: #fff;
}

.decor {
    position: absolute;
    top: 0;
    right: 0;
    width: 600px;
    height: 82px;
}

.titlebar {
    position: relative;
    height: 44px;
    padding-bottom: 7px;
    display: grid;
    grid-template-columns: 1fr auto 1fr;
    align-items: center;
}

.quick {
    display: flex;
    align-items: center;
    gap: 17px;
    padding: 4px 0 0 27px;
}

.quick .caret {
    margin-left: 3px;
}

.account {
    display: flex;
    align-items: center;
    justify-content: flex-end;
    padding-right: 22px;
}

.account button {
    width: 14px;
    margin-left: 43px;
}

.avatar {
    width: 30px;
    height: 30px;
    margin-left: 14px;
    border-radius: 50%;
    background: #d3d3d3;
    color: #777;
    font-size: 13px;
    line-height: 30px;
    text-align: center;
}

.account .avatar + button {
    margin-left: 36px;
}

.tabs {
    position: relative;
    display: flex;
    gap: 1px;
    height: 38px;
}

.tab {
    padding: 0 13px 4px;
}

.tab.file {
    padding: 0 23px 4px 22px;
}

.tab.active {
    background: #f1f1f1;
    color: #b64827;
}

.tab.tell {
    gap: 16px;
    padding-left: 18px;
}

.tab.share {
    gap: 4px;
    margin-left: auto;
    padding: 0 28px 2px 0;
}

/* ribbon */
.ribbon {
    flex: none;
    display: flex;
    background: #f1f1f1;
    border-bottom: 1px solid #c8c8c8;
    position: relative;
}

.group {
    position: relative;
    display: flex;
    flex-direction: column;
    padding-top: 3px;
    height: 117px;
}

.group::after {
    content: "";
    position: absolute;
    right: 0;
    top: 5px;
    bottom: 5px;
    border-right: 1px solid #bdbdbd;
}

.group-body {
    display: flex;
    height: 88px;
}

.group-name {
    height: 26px;
    padding-right: 22px;
    line-height: 28px;
    text-align: center;
}

.launch {
    position: absolute;
    right: 6px;
    bottom: 5px;
    width: 10px;
    height: 10px;
}

.launch.dim {
    color: #aaa;
}

.group.clipboard { width: 158px; }
.group.slides { width: 158px; }
.group.font { width: 339px; }
.group.paragraph { width: 384px; }
.group.drawing { width: 432px; }
.group.editing { width: 103px; }

.editing .group-name,
.slides .group-name {
    padding-right: 0;
}

.big {
    flex-direction: column;
    justify-content: flex-start;
    padding-top: 5px;
}

.big svg {
    height: 40px;
    margin-bottom: 1px;
}

.big .caret {
    margin-top: 9px;
}

.big .caret.inline {
    display: inline-block;
    margin: 0 0 3px 4px;
}

.clipboard .big {
    width: 67px;
    padding-left: 8px;
}

.slides .big {
    width: 75px;
    padding-left: 6px;
}

.stack {
    display: flex;
    flex-direction: column;
}

.stack button {
    height: 29px;
    justify-content: flex-start;
    gap: 4px;
}

.stack .caret {
    margin-left: 2px;
}

.stack .caret.far {
    margin-left: 10px;
}

.rows {
    display: flex;
    flex-direction: column;
    padding: 11px 0 0 11px;
}

.row {
    display: flex;
    align-items: center;
    height: 29px;
    margin-bottom: 9px;
}

.paragraph .rows {
    padding-left: 10px;
}

.tool {
    min-width: 28px;
    height: 29px;
}

.bar {
    height: 28px;
    margin: 0 4px;
    border-left: 1px solid #d0d0d0;
}

.combo {
    position: relative;
    height: 29px;
}

.combo select {
    width: 100%;
    height: 100%;
    padding: 0 4px;
    border: 1px solid #c3c3c3;
    border-radius: 0;
    background: #fdfdfd;
    appearance: none;
    font: inherit;
    font-size: 16px;
    color: #999;
}

.combo svg {
    position: absolute;
    right: 4px;
    top: 10px;
}

.combo.family { width: 154px; }
.combo.size { width: 72px; }

/* little triangle at the upper right of the letter */
.tip {
    align-self: flex-start;
    margin-top: 6px;
    border: 3px solid transparent;
    border-top-color: currentColor;
    border-bottom: 0;
}

.tip.up {
    border: 3px solid transparent;
    border-bottom-color: currentColor;
    border-top: 0;
}

.eraser {
    margin-left: 4px;
}

.font .row {
    font-size: 17px;
}

.font .rows .wide {
    min-width: 28px;
}

.font .row .strike {
    font-size: 13px;
}

.spacing {
    flex-direction: column;
    font-size: 14px;
    line-height: 16px;
}

.serif {
    font-family: "Liberation Serif", serif;
    font-size: 19px;
}

.shadow {
    text-shadow: 2px 1px 2px #aaa;
}

.av {
    font-size: 14px;
    fill: currentColor;
}

.num {
    font-size: 7px;
    fill: currentColor;
}

.rep {
    font-size: 11px;
    fill: #444;
}

.aa {
    gap: 4px;
    margin: 0 6px 0 10px;
}

.color {
    margin-left: 6px;
}

.bullets {
    width: 43px;
    background: #c6c6c6;
}

.bullets + .tool + .caret {
    margin: 0 3px 0 2px;
}

.paragraph .stack {
    margin-left: auto;
    padding-right: 18px;
}

.gallery {
    display: flex;
    height: 78px;
    margin: 4px 0 0 11px;
    border: 1px solid #c6c6c6;
    background: #fff;
}

.shapes {
    display: grid;
    grid-template-columns: repeat(6, 26px);
    padding-left: 1px;
}

.shapes svg {
    width: 20px;
    height: 18px;
    fill: none;
    stroke: #555;
}

.scroller {
    display: grid;
    grid-template-rows: repeat(3, 1fr);
    width: 20px;
}

.scroller button {
    border: 1px solid #b5b5b5;
    overflow: hidden;
}

.scroller svg {
    width: 16px;
    fill: none;
    stroke: #333;
    overflow: visible;
}

.arrange {
    width: 61px;
}

.quick-style {
    width: 61px;
}

.drawing .stack {
    margin-left: 9px;
}

.editing .stack {
    padding-left: 14px;
}

.collapse {
    position: absolute;
    right: 10px;
    bottom: 4px;
}

/* work area */
.work {
    flex: 1;
    min-height: 0;
    display: flex;
}

.outline {
    position: relative;
    flex: none;
    display: flex;
    width: 291px;
    border-right: 1px solid #b9b9b9;
    overflow: hidden;
}

.slides-list {
    flex: 1;
    margin: 0;
    padding: 23px 0 0 6px;
    list-style: none;
}

.slides-list li {
    display: flex;
    height: 112px;
    margin-bottom: 23px;
}

.slides-list span {
    width: 39px;
    font-size: 19px;
    line-height: 10px;
    color: #444;
}

.thumb {
    width: 196px;
    height: 112px;
    padding: 1px;
    border: 1px solid #b5b5b5;
    outline: 1px solid #fff;
    outline-offset: -2px;
    background: #cbe9ae;
    fill: #1c1c1c;
}

.current .thumb {
    border-color: #fff;
    box-shadow: 0 0 0 2px #d9775c;
}

.slides-list .current span {
    color: #c94f32;
}

.vscroll {
    display: flex;
    flex-direction: column;
    flex: none;
    width: 19px;
    margin: 2px 4px 3px 0;
    background: #dadada;
}

.vscroll button {
    flex: none;
    height: 19px;
    border: 1px solid #c4c4c4;
    background: #fff;
}

.tri {
    border: 5px solid transparent;
    border-top-color: #666;
    border-bottom: 0;
}

.tri.up {
    border: 5px solid transparent;
    border-bottom-color: #666;
    border-top: 0;
}

.track {
    flex: 1;
    display: flex;
    flex-direction: column;
}

.track::before {
    content: "";
    flex: 53;
}

.track::after {
    content: "";
    flex: 24;
}

.handle {
    flex: 23;
    border: 1px solid #b5b5b5;
    background: #fff;
}

.timer {
    position: absolute;
    left: 56px;
    bottom: 1px;
    width: 48px;
    height: 48px;
    border: 2px solid #eef6fc;
    border-radius: 50%;
    background: linear-gradient(170deg, #3f83e0 0%, #4a96e8 75%, #7cc8f2 76%);
    box-shadow: 0 0 3px #999;
    color: #fff;
    font-size: 14px;
    line-height: 44px;
    text-align: center;
}

.stage {
    flex: 1;
    display: flex;
    align-items: center;
    justify-content: center;
    margin-bottom: 2px;
    border-bottom: 1px solid #b9b9b9;
}

.main-scroll {
    margin: 2px 1px 20px 0;
}

.main-scroll .track::before { flex: 65; }
.main-scroll .handle { flex: 4; }
.main-scroll .track::after { flex: 31; }

.main-scroll .page {
    flex-direction: column;
    height: 21px;
    border: 0;
    background: #e6e6e6;
}

/* slide canvas */
.slide {
    position: relative;
    height: 85%;
    aspect-ratio: 16 / 9;
    padding: 41px 101px 0;
    border: 1px solid #b9c9a8;
    background: #cbe9ae;
    color: #0c0c0c;
}

.slide h1 {
    margin: 0 0 54px;
    font-size: 55px;
    line-height: 80px;
    font-weight: 700;
}

.slide h2 {
    margin: 0;
    font-size: 35px;
    line-height: 46px;
    font-weight: 500;
}

.slide ul {
    margin: 0;
    padding-left: 44px;
    list-style: none;
    font-size: 30px;
    line-height: 38px;
    font-weight: 300;
    white-space: nowrap;
}

.slide ul li::before {
    content: "Ø";
    font-weight: 400;
}

.lines {
    position: absolute;
    inset: 0;
    width: 100%;
    height: 100%;
}

.node {
    position: absolute;
    font-size: 22px;
    line-height: 27px;
    font-weight: 300;
}

.node span,
.minus,
.account-box {
    font-size: 21px;
    font-weight: 400;
}

.minus {
    left: 468px;
    top: 340px;
}

.account-box {
    left: 344px;
    top: 372px;
    width: 238px;
    height: 74px;
    background: #5b9bd5;
    line-height: 72px;
    text-align: center;
}

.alipay {
    left: 134px;
    top: 506px;
}

.wechat {
    left: 640px;
    top: 480px;
}

.pointer {
    position: absolute;
    left: 429px;
    top: 508px;
}

/* status bar */
.status {
    flex: none;
    display: flex;
    align-items: center;
    height: 29px;
    padding: 0 8px 0 10px;
    border-top: 1px solid #c0c0c0;
    background: #f1f1f1;
    color: #444;
}

.proof {
    margin: 0 24px 0 28px;
}

.status-right {
    display: flex;
    align-items: center;
    height: 100%;
    margin-left: auto;
}

.notes {
    gap: 7px;
    margin-right: 24px;
}

.comments {
    gap: 4px;
    margin-right: 24px;
}

.views {
    display: flex;
    height: 100%;
}

.views button {
    width: 48px;
}

.views .on {
    background: #c8c8c8;
}

.zoom {
    display: flex;
    align-items: center;
    gap: 4px;
    margin: 0 13px 0 4px;
}

.zoom button {
    width: 12px;
    font-size: 20px;
}

.zoom input {
    width: 124px;
    height: 20px;
    margin: 0;
    appearance: none;
    background: linear-gradient(#aaa, #aaa) center / 100% 1px no-repeat, linear-gradient(#aaa, #aaa) center / 1px 8px no-repeat;
}

.zoom input::-webkit-slider-thumb {
    appearance: none;
    width: 6px;
    height: 14px;
    background: #666;
}

.percent {
    width: 49px;
}

/* taskbar */
.taskbar {
    flex: none;
    display: flex;
    height: 50px;
    background: linear-gradient(90deg, #141817 0%, #131716 55%, #0d1719 70%, #03151d 90%, #071016 100%);
    color: #fff;
}

.start {
    width: 60px;
    background: #0e100f;
}

.search {
    display: flex;
    align-items: center;
    width: 430px;
    padding: 0 18px 0 11px;
    background: #f0f0f0;
}

.search input {
    flex: 1;
    min-width: 0;
    margin: 0 10px 0 11px;
    padding: 0;
    border: 0;
    background: none;
    font: inherit;
    font-size: 19px;
}

.search input::placeholder {
    color: #333;
}

.taskview {
    width: 62px;
}

.apps {
    display: flex;
    padding-left: 1px;
}

.apps button {
    position: relative;
    width: 62px;
}

.apps button::after {
    content: "";
    position: absolute;
    left: 6px;
    right: 6px;
    bottom: 0;
    height: 3px;
    background: #76b0e0;
}

.apps .running {
    background: #40433f;
}

.apps .running::after {
    left: 0;
    right: 0;
}

.logo-p {
    font-size: 14px;
    font-weight: 700;
    fill: #fff;
}

.logo-ij {
    font-family: "Liberation Mono", monospace;
    font-size: 12px;
    font-weight: 700;
    fill: #fff;
}

.tray {
    display: flex;
    align-items: center;
    margin-left: auto;
    padding-right: 32px;
}

.tray button {
    width: 30px;
}

.tray .people {
    margin-right: 15px;
}

.tray .ime {
    font-size: 17px;
}

.clock {
    margin: 0 30px 0 13px;
    padding-bottom: 2px;
    font-size: 15px;
    line-height: 23px;
    text-align: center;
}

.tray .notice {
    position: relative;
    width: 20px;
}

.notice span {
    position: absolute;
    left: 9px;
    top: 10px;
    width: 20px;
    height: 20px;
    border: 1px solid #999;
    border-radius: 50%;
    background: #25282b;
    font-size: 13px;
    font-weight: 700;
    line-height: 18px;
}
```
